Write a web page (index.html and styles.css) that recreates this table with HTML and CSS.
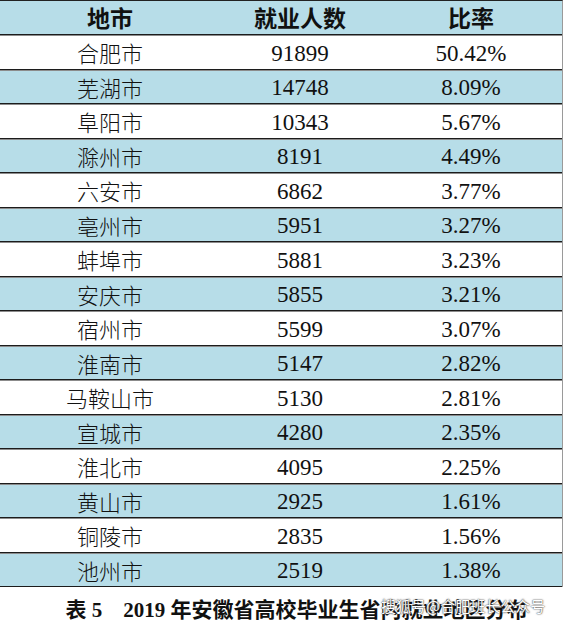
FILE: index.html
```html
<!DOCTYPE html>
<html lang="zh-CN">
<head>
    <meta charset="UTF-8">
    <meta name="viewport" content="width=device-width, initial-scale=1.0">
    <title>2019年安徽省高校毕业生省内就业地区分布</title>
    <link rel="stylesheet" href="styles.css">
</head>
<body>
    <div class="sheet">
        <div class="row head">
            <div class="cell">地市</div>
            <div class="cell">就业人数</div>
            <div class="cell">比率</div>
        </div>
        <div class="row"><div class="cell city">合肥市</div><div class="cell num">91899</div><div class="cell num">50.42%</div></div>
        <div class="row alt"><div class="cell city">芜湖市</div><div class="cell num">14748</div><div class="cell num">8.09%</div></div>
        <div class="row"><div class="cell city">阜阳市</div><div class="cell num">10343</div><div class="cell num">5.67%</div></div>
        <div class="row alt"><div class="cell city">滁州市</div><div class="cell num">8191</div><div class="cell num">4.49%</div></div>
        <div class="row"><div class="cell city">六安市</div><div class="cell num">6862</div><div class="cell num">3.77%</div></div>
        <div class="row alt"><div class="cell city">亳州市</div><div class="cell num">5951</div><div class="cell num">3.27%</div></div>
        <div class="row"><div class="cell city">蚌埠市</div><div class="cell num">5881</div><div class="cell num">3.23%</div></div>
        <div class="row alt"><div class="cell city">安庆市</div><div class="cell num">5855</div><div class="cell num">3.21%</div></div>
        <div class="row"><div class="cell city">宿州市</div><div class="cell num">5599</div><div class="cell num">3.07%</div></div>
        <div class="row alt"><div class="cell city">淮南市</div><div class="cell num">5147</div><div class="cell num">2.82%</div></div>
        <div class="row"><div class="cell city">马鞍山市</div><div class="cell num">5130</div><div class="cell num">2.81%</div></div>
        <div class="row alt"><div class="cell city">宣城市</div><div class="cell num">4280</div><div class="cell num">2.35%</div></div>
        <div class="row"><div class="cell city">淮北市</div><div class="cell num">4095</div><div class="cell num">2.25%</div></div>
        <div class="row alt"><div class="cell city">黄山市</div><div class="cell num">2925</div><div class="cell num">1.61%</div></div>
        <div class="row"><div class="cell city">铜陵市</div><div class="cell num">2835</div><div class="cell num">1.56%</div></div>
        <div class="row alt"><div class="cell city">池州市</div><div class="cell num">2519</div><div class="cell num">1.38%</div></div>
    </div>
    <p class="caption">表 5　2019 年安徽省高校毕业生省内就业地区分布</p>
    <span class="watermark">搜狐号@合肥班长公众号</span>
</body>
</html>
```

FILE: styles.css
```css
body {
    margin: 0;
    background: #fff;
    color: #111;
    font-family: "Liberation Serif", "Noto Sans CJK SC", serif;
    position: relative;
    height: 624px;
    overflow: hidden;
}
.sheet {
    width: 562px;
    border-right: 1px solid #9a9a9a;
    border-top: 1px solid #222;
}
.row {
    display: grid;
    grid-template-columns: 220px 160px 1fr;
    height: 34.5px;
    box-sizing: border-box;
    border-top: 1px solid #8c8c8c;
    border-bottom: 1px solid #1c1c1c;
    background: #fff;
}
.row.alt, .row.head {
    background: #b7dde8;
}
.row.head {
    height: 34px;
    border-top: none;
    font-family: "Noto Sans CJK SC", sans-serif;
    font-weight: 700;
    font-size: 23px;
}
.cell {
    display: flex;
    align-items: center;
    justify-content: center;
    line-height: 1;
}
.city {
    font-family: "Noto Sans CJK SC", sans-serif;
    font-weight: 300;
    font-size: 22px;
}
.num {
    font-size: 23px;
    padding-top: 2px;
}
.caption {
    margin: 0;
    padding-top: 8px;
    text-align: center;
    font-family: "Liberation Serif", "Noto Sans CJK SC", serif;
    font-weight: 700;
    font-size: 21px;
    line-height: 30px;
    padding-left: 30px;
}
.watermark {
    position: absolute;
    left: 381px;
    top: 595px;
    font-family: "Noto Sans CJK SC", sans-serif;
    font-size: 15px;
    color: #fff;
    text-shadow: 0 0 1px #333, 0 0 2px #555;
}
```
